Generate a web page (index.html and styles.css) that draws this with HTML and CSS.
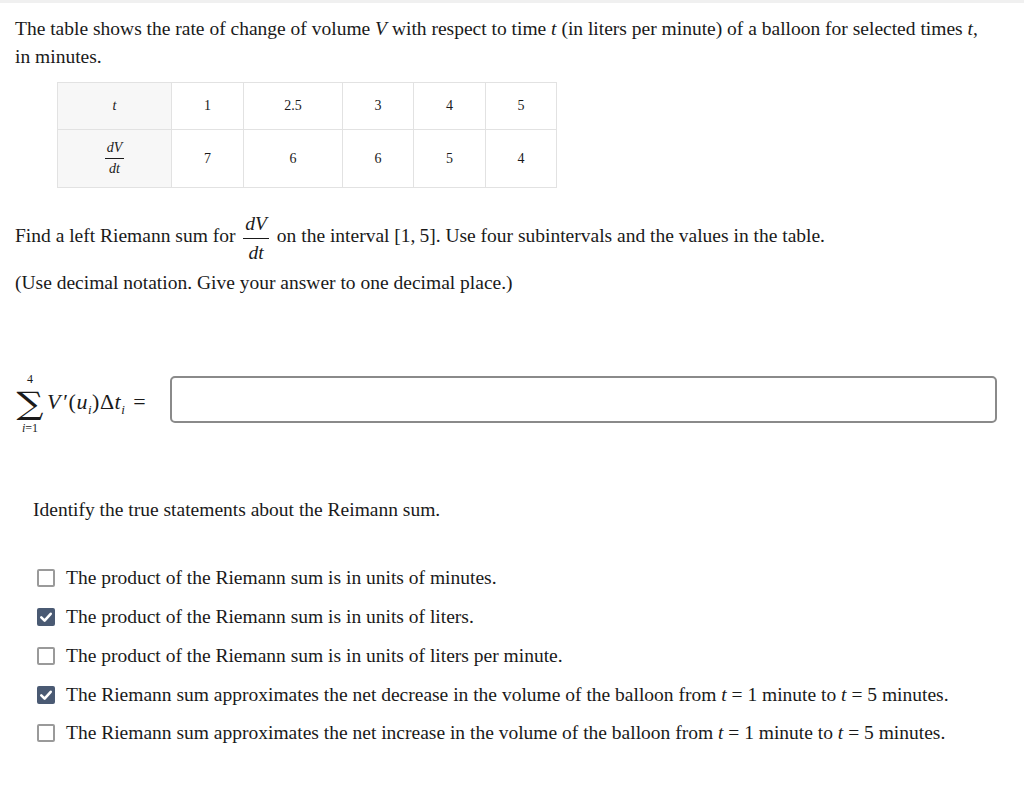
FILE: index.html
```html
<!DOCTYPE html>
<html>
<head>
<meta charset="utf-8">
<link rel="stylesheet" href="styles.css">
</head>
<body>
<div class="topbar"></div>
<main class="page">
  <p class="intro">The table shows the rate of change of volume <i>V</i> with respect to time <i>t</i> (in liters per minute) of a balloon for selected times <i>t</i>, in minutes.</p>

  <table class="data">
    <tr class="r1">
      <th><i>t</i></th>
      <td class="c1">1</td><td class="c2">2.5</td><td class="c3">3</td><td class="c4">4</td><td class="c5">5</td>
    </tr>
    <tr class="r2">
      <th><span class="frac small"><span class="num"><i>dV</i></span><span class="den"><i>dt</i></span></span></th>
      <td>7</td><td>6</td><td>6</td><td>5</td><td>4</td>
    </tr>
  </table>

  <p class="find">Find a left Riemann sum for <span class="frac"><span class="num"><i>dV</i></span><span class="den"><i>dt</i></span></span> on the interval [1,&#8201;5]. Use four subintervals and the values in the table.</p>
  <p class="note">(Use decimal notation. Give your answer to one decimal place.)</p>

  <div class="answer">
    <span class="sum">
      <span class="sigma"><span class="lim">4</span><span class="sig">&sum;</span><span class="lim"><i>i</i>=1</span></span>
      <span class="expr"><i>V</i>&#8202;′(<i>u<sub>i</sub></i>)Δ<i>t<sub>i</sub></i><span class="eq">=</span></span>
    </span>
    <div class="box"></div>
  </div>

  <p class="identify">Identify the true statements about the Reimann sum.</p>

  <ul class="choices">
    <li><span class="cb"></span><span class="lbl">The product of the Riemann sum is in units of minutes.</span></li>
    <li><span class="cb on"><svg viewBox="0 0 18 18" width="18" height="18"><path d="M4.3 9.4 L7.6 12.6 L13.7 5.8" fill="none" stroke="#fff" stroke-width="2.6" stroke-linecap="round" stroke-linejoin="round"/></svg></span><span class="lbl">The product of the Riemann sum is in units of liters.</span></li>
    <li><span class="cb"></span><span class="lbl">The product of the Riemann sum is in units of liters per minute.</span></li>
    <li><span class="cb on"><svg viewBox="0 0 18 18" width="18" height="18"><path d="M4.3 9.4 L7.6 12.6 L13.7 5.8" fill="none" stroke="#fff" stroke-width="2.6" stroke-linecap="round" stroke-linejoin="round"/></svg></span><span class="lbl">The Riemann sum approximates the net decrease in the volume of the balloon from <i>t</i>&nbsp;=&nbsp;1 minute to <i>t</i>&nbsp;=&nbsp;5 minutes.</span></li>
    <li><span class="cb"></span><span class="lbl">The Riemann sum approximates the net increase in the volume of the balloon from <i>t</i>&nbsp;=&nbsp;1 minute to <i>t</i>&nbsp;=&nbsp;5 minutes.</span></li>
  </ul>
</main>
</body>
</html>
```

FILE: styles.css
```css
html, body {
  margin: 0;
  padding: 0;
  background: #fff;
}
body {
  font-family: "Liberation Serif", "Times New Roman", serif;
  font-size: 19.5px;
  color: #1a1a1a;
}
.topbar {
  height: 3px;
  background: #f0f0f0;
}
.page {
  padding: 0 15px;
}
p {
  margin: 0;
}
.intro {
  margin-top: 12px;
  line-height: 28px;
  width: 970px;
}
.data {
  border-collapse: collapse;
  margin: 11px 0 0 42px;
  font-family: "Liberation Serif", "Times New Roman", serif;
  font-size: 14px;
}
.data th, .data td {
  border: 1.5px solid #e2e2e2;
  text-align: center;
  font-weight: normal;
  padding: 0;
  font-family: "Liberation Serif", "Times New Roman", serif;
}
.data th {
  background: #f7f7f7;
  width: 113px;
}
.data .r1 th, .data .r1 td { height: 46px; }
.data .r2 th, .data .r2 td { height: 57px; }
.c1 { width: 71px; }
.c2 { width: 98px; }
.c3 { width: 70px; }
.c4 { width: 71px; }
.c5 { width: 70px; }

.frac {
  display: inline-flex;
  flex-direction: column;
  align-items: center;
  vertical-align: middle;
  line-height: 1;
  margin: 0 3px;
}
.frac .num {
  border-bottom: 1.5px solid #1a1a1a;
  padding: 0 2px 4px;
}
.frac .den {
  padding-top: 4px;
}
.frac.small .num { padding-bottom: 3px; }
.frac.small .den { padding-top: 3px; }

.find {
  margin-top: 26px;
}
.note {
  margin-top: 10px;
}
.answer {
  display: flex;
  align-items: flex-start;
  margin-top: 79px;
  gap: 24px;
}
.sum {
  display: inline-flex;
  align-items: center;
}
.sigma {
  display: inline-flex;
  flex-direction: column;
  align-items: center;
  line-height: 1;
  margin-left: 3px;
  width: 24px;
  font-family: "Liberation Serif", "Times New Roman", serif;
}
.sigma .lim {
  font-size: 12px;
  line-height: 12px;
  height: 12px;
}
.sigma .sig {
  font-family: "DejaVu Serif", serif;
  font-size: 31px;
  line-height: 28px;
  height: 28px;
  margin: 4px 0 5px;
  display: inline-block;
  transform: scaleX(1.22);
}
.expr {
  margin-left: 5px;
  font-size: 22px;
  font-family: "Liberation Serif", "Times New Roman", serif;
  letter-spacing: 0.5px;
}
.expr sub {
  font-size: 13px;
}
.eq {
  margin-left: 8px;
}
.box {
  flex: none;
  width: 823px;
  height: 43px;
  margin-top: 3px;
  border: 2px solid #8a8a8a;
  border-radius: 5px;
}
.identify {
  margin-top: 65px;
  margin-left: 18px;
}
.choices {
  list-style: none;
  margin: 38px 0 0 22px;
  padding: 0;
}
.choices li {
  display: flex;
  align-items: center;
  height: 38.75px;
}
.cb {
  flex: none;
  box-sizing: border-box;
  width: 18px;
  height: 18px;
  border: 2px solid #9a9a9a;
  border-radius: 2px;
  margin-right: 11px;
  display: inline-flex;
  align-items: center;
  justify-content: center;
}
.cb.on {
  background: #4a5a73;
  border-color: #4a5a73;
}
.cb svg {
  display: block;
  flex: none;
}
```
